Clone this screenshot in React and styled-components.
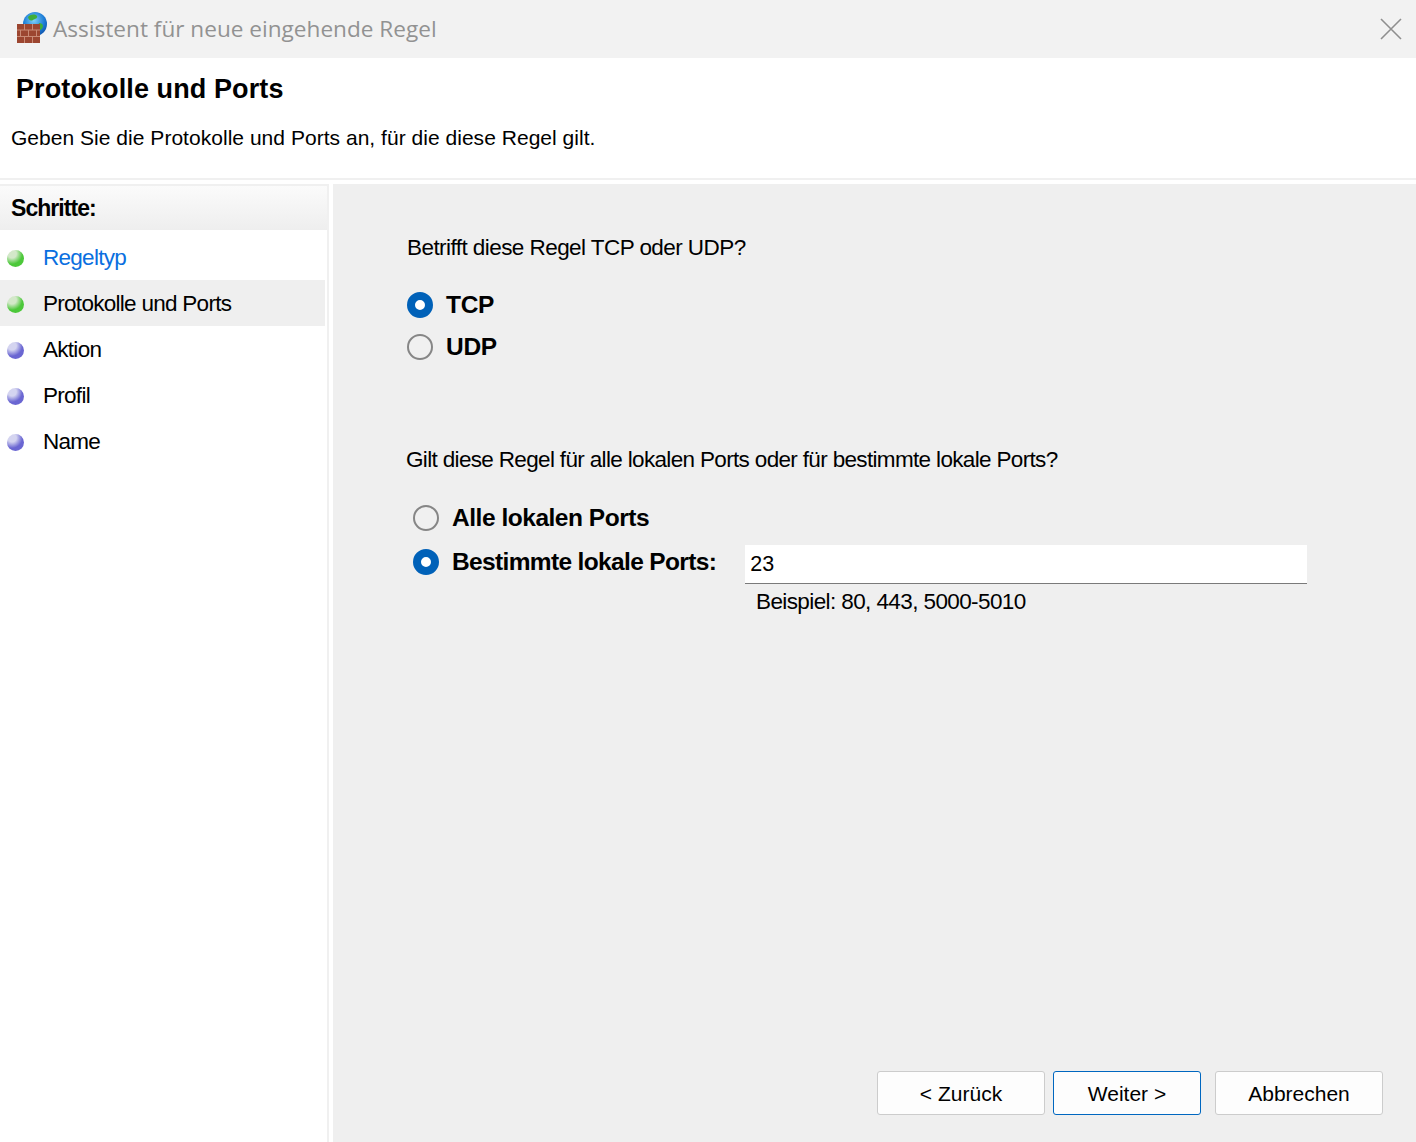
import React from "react";
import styled, { createGlobalStyle } from "styled-components";

const Global = createGlobalStyle`
  html, body { margin: 0; padding: 0; background: #fff; }
  body { font-family: "Liberation Sans", Arial, sans-serif; color: #000; }
`;
const Window = styled.div`
  width: 1416px; height: 1142px; display: flex; flex-direction: column; overflow: hidden; background: #fff;
`;
const TitleBar = styled.header`
  height: 58px; flex: none; background: #f2f2f2; display: flex; align-items: center; padding: 0 14px 0 15px; box-sizing: border-box;
`;
const TitleText = styled.span`
  font-family: "Open Sans", "Noto Sans", sans-serif; font-size: 22.6px; color: #929292; margin-left: 4px; flex: 1; margin-top: -2px;
`;
const Banner = styled.section`
  height: 122px; flex: none; box-sizing: border-box; border-bottom: 2px solid #f0f0f0;
  display: flex; flex-direction: column;
`;
const BannerTitle = styled.h1`
  margin: 15px 0 0 16px; font-size: 27px; line-height: 32px; font-weight: 700; letter-spacing: 0.1px;
`;
const BannerSub = styled.p`
  margin: 20px 0 0 11px; font-size: 21px; line-height: 26px; letter-spacing: 0.03px;
`;
const Body = styled.div`
  flex: 1; display: flex; padding-top: 4px; min-height: 0;
`;
const Sidebar = styled.nav`
  width: 329px; flex: none; box-sizing: border-box; border-top: 2px solid #f0f0f0; border-right: 2px solid #f0f0f0;
`;
const SideHead = styled.div`
  height: 44px; box-sizing: border-box; padding: 0 0 0 11px; display: flex; align-items: center;
  background: linear-gradient(#fbfbfb, #eeeeee); font-size: 23px; font-weight: 700; letter-spacing: -0.95px; margin-bottom: 4px;
`;
const Step = styled.div`
  height: 46px; width: 325px; display: flex; align-items: center; padding: 2px 0 0 7px; box-sizing: border-box;
  background: ${(p) => (p.$active ? "#efefef" : "transparent")};
  color: ${(p) => (p.$link ? "#0a6fe0" : "#000")};
  font-size: 22.5px; letter-spacing: -0.72px;
`;
const Dot = styled.span`
  width: 17px; height: 17px; border-radius: 50%; flex: none; margin-right: 19px;
  background: radial-gradient(circle at 30% 22%, ${(p) => (p.$done ? "#d3e8c9" : "#d4d4f0")} 0 24%, ${(p) => (p.$done ? "#4cc83a" : "#6a66d2")} 58%);
`;
const Main = styled.main`
  flex: 1; margin-left: 4px; background: #efefef; display: flex; flex-direction: column; padding: 51px 33px 27px 74px;
`;
const Question = styled.p`
  margin: ${(p) => p.$m || 0}; font-size: 22.5px; line-height: 26px; letter-spacing: ${(p) => p.$ls || "-0.56px"};
`;
const OptionRow = styled.label`
  display: flex; align-items: center; height: ${(p) => p.$h || "42px"}; font-size: 24.5px; font-weight: 700; letter-spacing: ${(p) => p.$ls || "-0.3px"};
`;
const Radio = styled.span`
  width: 26px; height: 26px; border-radius: 50%; box-sizing: border-box; flex: none; margin-right: 13px;
  ${(p) => p.$on ? "border: 8px solid #0061b8; background: #fff;" : "border: 2px solid #868686; background: #f0f0f0;"}
`;
const PortBlock = styled.div`
  margin: 23px 0 0 6px;
`;
const PortInput = styled.div`
  width: 562px; height: 39px; background: #fff; border-bottom: 1px solid #7a7a7a; box-sizing: border-box;
  margin: 5px 0 0 29px; padding: 5px 0 0 5px; font-size: 21.5px; line-height: 28px; font-weight: 400; letter-spacing: 0;
`;
const Example = styled.div`
  margin: 4px 0 0 343px; font-size: 22.5px; line-height: 28px; letter-spacing: -0.6px;
`;
const Footer = styled.footer`
  margin-top: auto; display: flex; justify-content: flex-end; gap: 8px;
`;
const Button = styled.button`
  width: ${(p) => p.$w}px; height: 44px; margin-left: ${(p) => p.$ml || 0}px; background: #fdfdfd; box-sizing: border-box; border-radius: 3px;
  border: 1px solid ${(p) => (p.$primary ? "#0067c0" : "#cccccc")};
  font: 400 21px "Liberation Sans", Arial, sans-serif; color: #000; padding: 2px 0 0;
`;

const Logo = () => (
  <svg width="34" height="32" viewBox="0 0 34 32" style={{ flex: "none", marginTop: "-3px" }}>
    <defs>
      <radialGradient id="g" cx="0.45" cy="0.35" r="0.7">
        <stop offset="0" stopColor="#7fd0f5" />
        <stop offset="0.6" stopColor="#1f7fd8" />
        <stop offset="1" stopColor="#0e4fa8" />
      </radialGradient>
    </defs>
    <circle cx="20" cy="12" r="12" fill="url(#g)" />
    <path d="M13 5c3-3 7-3 9-1 1 2-2 3-4 4s-4 1-5-3zM24 11c2 0 4 1 4 3s-2 4-3 4-2-5-1-7z" fill="#3fae3a" />
    <rect x="2" y="12" width="23" height="19" fill="#9c4630" />
    <g stroke="#c98a75" strokeWidth="1" fill="none">
      <path d="M2 18h23M2 24.500h23" />
      <path d="M9.500 12v6M17.500 12v6M5.500 18v6.500M13.500 18v6.500M21.500 18v6.500M9.500 24.500V31M17.500 24.500V31" />
    </g>
  </svg>
);

const CloseIcon = () => (
  <svg width="22" height="22" viewBox="0 0 22 22" style={{ flex: "none" }}>
    <path d="M1 1l20 20M21 1L1 21" stroke="#8f8f8f" strokeWidth="1.6" />
  </svg>
);

export default function App() {
  return (
    <Window>
      <Global />
      <TitleBar>
        <Logo />
        <TitleText>Assistent für neue eingehende Regel</TitleText>
        <CloseIcon />
      </TitleBar>
      <Banner>
        <BannerTitle>Protokolle und Ports</BannerTitle>
        <BannerSub>Geben Sie die Protokolle und Ports an, für die diese Regel gilt.</BannerSub>
      </Banner>
      <Body>
        <Sidebar>
          <SideHead>Schritte:</SideHead>
          <Step $link><Dot $done />Regeltyp</Step>
          <Step $active><Dot $done />Protokolle und Ports</Step>
          <Step><Dot />Aktion</Step>
          <Step><Dot />Profil</Step>
          <Step><Dot />Name</Step>
        </Sidebar>
        <Main>
          <Question $m="0 0 23px 0">Betrifft diese Regel TCP oder UDP?</Question>
          <OptionRow><Radio $on />TCP</OptionRow>
          <OptionRow><Radio />UDP</OptionRow>
          <Question $m="79px 0 0 -1px" $ls="-0.66px">Gilt diese Regel für alle lokalen Ports oder für bestimmte lokale Ports?</Question>
          <PortBlock>
            <OptionRow $h="44px" $ls="-0.47px"><Radio />Alle lokalen Ports</OptionRow>
            <OptionRow $h="44px" $ls="-0.65px"><Radio $on />Bestimmte lokale Ports:<PortInput>23</PortInput></OptionRow>
            <Example>Beispiel: 80, 443, 5000-5010</Example>
          </PortBlock>
          <Footer>
            <Button $w={168}>&lt; Zurück</Button>
            <Button $w={148} $primary>Weiter &gt;</Button>
            <Button $w={168} $ml={6}>Abbrechen</Button>
          </Footer>
        </Main>
      </Body>
    </Window>
  );
}
